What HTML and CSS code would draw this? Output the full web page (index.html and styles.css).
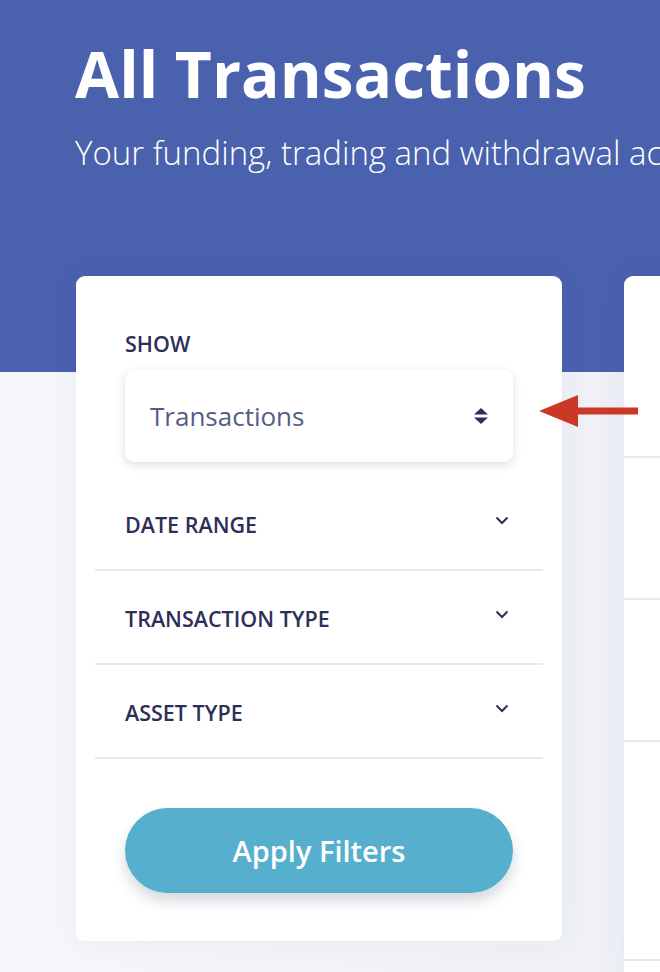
FILE: index.html
```html
<!DOCTYPE html>
<html lang="en">
<head>
    <meta charset="UTF-8">
    <meta name="viewport" content="width=device-width, initial-scale=1.0">
    <title>All Transactions</title>
    <link rel="stylesheet" href="styles.css">
</head>
<body>
    <header class="hero">
        <h1 class="hero-title">All Transactions</h1>
        <p class="hero-subtitle">Your funding, trading and withdrawal activity</p>
    </header>
    <main class="content">
        <aside class="filters">
            <div class="filter-show">
                <label class="filter-label" for="show">Show</label>
                <div class="select" id="show">
                    <span>Transactions</span>
                    <svg class="select-icon" width="16" height="18" viewBox="0 0 16 18">
                        <path d="M8 1 L15 7.5 H1 Z" fill="#2e2f58"/>
                        <path d="M8 17 L15 10.5 H1 Z" fill="#2e2f58"/>
                    </svg>
                </div>
            </div>
            <div class="filter-row">
                <span class="filter-label">Date Range</span>
                <svg class="chevron" width="14" height="9" viewBox="0 0 14 9">
                    <path d="M1.5 1.5 L7 7 L12.5 1.5" fill="none" stroke="#2e2f58" stroke-width="2"/>
                </svg>
            </div>
            <div class="filter-row">
                <span class="filter-label">Transaction Type</span>
                <svg class="chevron" width="14" height="9" viewBox="0 0 14 9">
                    <path d="M1.5 1.5 L7 7 L12.5 1.5" fill="none" stroke="#2e2f58" stroke-width="2"/>
                </svg>
            </div>
            <div class="filter-row">
                <span class="filter-label">Asset Type</span>
                <svg class="chevron" width="14" height="9" viewBox="0 0 14 9">
                    <path d="M1.5 1.5 L7 7 L12.5 1.5" fill="none" stroke="#2e2f58" stroke-width="2"/>
                </svg>
            </div>
            <button class="apply-btn" type="button">Apply Filters</button>
        </aside>

        <!-- annotation pointing at the select -->
        <svg class="pointer-arrow" width="100" height="34" viewBox="0 0 100 34">
            <path d="M0 17 L39 1 L39 13.5 L99 13.5 L99 20.5 L39 20.5 L39 33 Z" fill="#cc3826"/>
        </svg>

        <section class="results">
            <div class="result-row first"></div>
            <div class="result-row"></div>
            <div class="result-row"></div>
            <div class="result-row tall"></div>
        </section>
    </main>
</body>
</html>
```

FILE: styles.css
```css
html, body {
    margin: 0;
    padding: 0;
}

body {
    font-family: "Open Sans", "Noto Sans", sans-serif;
    background: linear-gradient(90deg, #f6f7fb 0%, #eef0f6 100%);
    color: #2e2f58;
    width: 660px;
    height: 972px;
    overflow: hidden;
}

.hero {
    background-color: #4a61ae;
    height: 372px;
    padding: 36px 0 0 75px;
    box-sizing: border-box;
    white-space: nowrap;
    color: #fff;
}

.hero-title {
    margin: 0;
    font-size: 64px;
    font-weight: 700;
    line-height: 76px;
}

.hero-subtitle {
    margin: 21px 0 0;
    font-size: 33px;
    font-weight: 300;
    line-height: 40px;
}

.content {
    position: relative;
    display: flex;
    align-items: flex-start;
    gap: 62px;
    margin-top: -96px;
    padding-left: 76px;
}

.filters {
    flex: 0 0 486px;
    box-sizing: border-box;
    background-color: #fff;
    border-radius: 9px;
    box-shadow: 0 0 30px rgba(60, 70, 120, 0.06);
    padding: 56px 49px 48px;
}

.filter-label {
    display: block;
    font-size: 21.5px;
    font-weight: 600;
    line-height: 24px;
    text-transform: uppercase;
    color: #2e2f58;
}

.filter-show .filter-label {
    margin-bottom: 14px;
}

.select {
    display: flex;
    align-items: center;
    justify-content: space-between;
    height: 92px;
    padding: 0 24px 0 25px;
    box-sizing: border-box;
    background-color: #fff;
    border-radius: 9px;
    box-shadow: 0 3px 10px rgba(40, 45, 90, 0.16);
    font-size: 26px;
    color: #535e82;
}

.select-icon {
    display: block;
}

.filter-row {
    display: flex;
    align-items: center;
    justify-content: space-between;
    height: 94px;
    box-sizing: border-box;
    margin: 0 -30px;
    padding: 4px 34px 0 30px;
    border-bottom: 2px solid #e8e9f0;
}

.filter-show + .filter-row {
    margin-top: 15px;
}

.chevron {
    display: block;
    margin-top: -10px;
}

.apply-btn {
    display: block;
    width: 100%;
    height: 85px;
    margin-top: 49px;
    border: none;
    border-radius: 43px;
    background-color: #56afcd;
    box-shadow: 0 8px 14px rgba(40, 60, 90, 0.2);
    color: #fff;
    font-family: inherit;
    font-size: 29px;
    font-weight: 600;
    cursor: pointer;
}

.pointer-arrow {
    position: absolute;
    left: 539px;
    top: 118px;
}

.results {
    flex: 0 0 600px;
    background-color: #fff;
    border-radius: 9px 9px 0 0;
    box-shadow: 0 0 30px rgba(60, 70, 120, 0.06);
    height: 700px;
}

.result-row {
    height: 142px;
    box-sizing: border-box;
    border-bottom: 2px solid #e8e9f0;
}

.result-row.first {
    height: 182px;
}

.result-row.tall {
    height: 219px;
}
```
